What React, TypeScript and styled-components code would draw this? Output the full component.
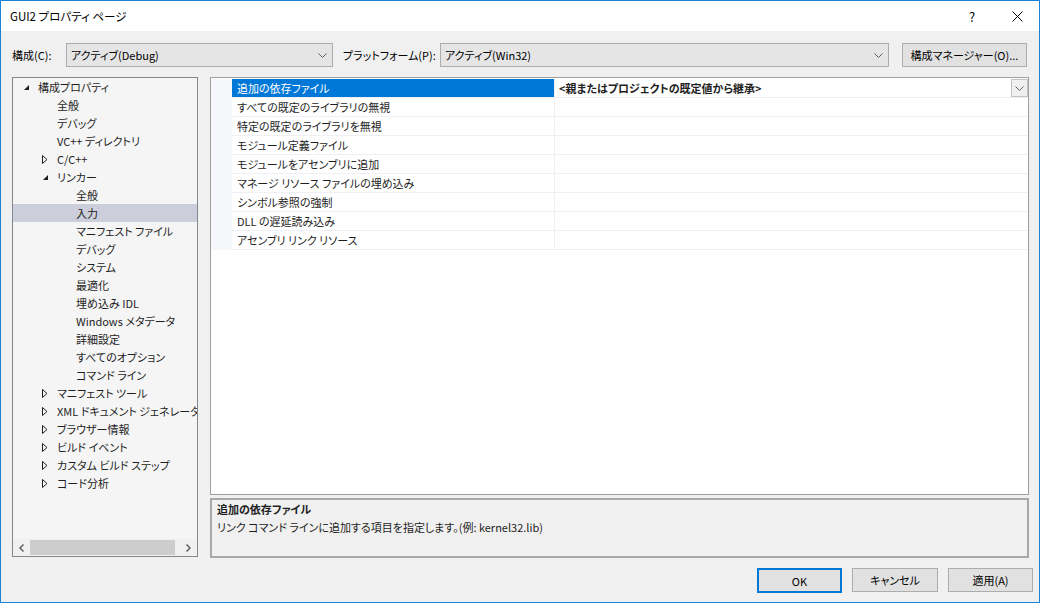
import React from "react";
import styled, { createGlobalStyle } from "styled-components";

const GlobalStyle = createGlobalStyle`
  html, body { margin: 0; padding: 0; background: #ffffff; }
  * { box-sizing: border-box; }
`;

const FONT = `"Noto Sans CJK JP", "Noto Sans", sans-serif`;

const Window = styled.div`
  width: 1040px;
  height: 603px;
  border: 1px solid #1883d7;
  background: #f0f0f0;
  display: flex;
  flex-direction: column;
  font-family: ${FONT};
  font-size: 11px;
  font-feature-settings: "palt";
  color: #000;
  overflow: hidden;
`;

const TitleBar = styled.div`
  height: 30px;
  flex: none;
  background: #ffffff;
  display: flex;
  align-items: center;
  padding-left: 9px;
`;

const Title = styled.div`
  flex: 1;
  line-height: 30px;
  font-size: 11.5px;
`;

const CaptionButton = styled.div<{ $w: number }>`
  width: ${(p) => p.$w}px;
  height: 30px;
  display: flex;
  align-items: center;
  justify-content: center;
  font-size: 13px;
`;

const Body = styled.div`
  flex: 1;
  display: flex;
  flex-direction: column;
  padding: 12px 10px 0 11px;
`;

const Toolbar = styled.div`
  height: 24px;
  display: flex;
  align-items: center;
`;

const FieldLabel = styled.div<{ $w: number }>`
  width: ${(p) => p.$w}px;
  flex: none;
  white-space: nowrap;
`;

const Combo = styled.div<{ $w: number; $ml?: number }>`
  width: ${(p) => p.$w}px;
  height: 24px;
  margin-right: ${(p) => p.$ml ?? 0}px;
  flex: none;
  background: #e5e5e5;
  border: 1px solid #adadad;
  display: flex;
  align-items: center;
  padding: 0 5px 0 4px;
`;

const ComboText = styled.div`
  flex: 1;
  white-space: nowrap;
`;

const PushButton = styled.div<{ $w: number; $default?: boolean }>`
  width: ${(p) => p.$w}px;
  height: ${(p) => (p.$default ? 25 : 24)}px;
  flex: none;
  background: #e1e1e1;
  border: ${(p) => (p.$default ? "2px solid #0078d7" : "1px solid #adadad")};
  display: flex;
  align-items: center;
  justify-content: center;
  white-space: nowrap;
`;

const Main = styled.div`
  margin-top: 10px;
  height: 480px;
  display: flex;
  gap: 12px;
`;

const TreePanel = styled.div`
  width: 186px;
  flex: none;
  border: 1px solid #828790;
  background: #f5f5f5;
  display: flex;
  flex-direction: column;
`;

const TreeList = styled.div`
  flex: 1;
  overflow: hidden;
  color: #1e1e1e;
`;

const TreeRow = styled.div<{ $level: number; $selected?: boolean }>`
  height: 18px;
  display: flex;
  align-items: center;
  padding-left: ${(p) => 6 + p.$level * 19}px;
  background: ${(p) => (p.$selected ? "#cccedb" : "transparent")};
  white-space: nowrap;
  line-height: 18px;
`;

const ArrowSlot = styled.div`
  width: 19px;
  flex: none;
  display: flex;
  align-items: center;
  padding-left: 4px;
`;

const HScroll = styled.div`
  height: 17px;
  flex: none;
  background: #f0f0f0;
  display: flex;
  align-items: center;
`;

const ScrollArrow = styled.div`
  width: 17px;
  height: 17px;
  flex: none;
  display: flex;
  align-items: center;
  justify-content: center;
`;

const ScrollTrack = styled.div`
  flex: 1;
  height: 17px;
  display: flex;
  align-items: center;
  padding-right: 3px;
`;

const ScrollThumb = styled.div`
  height: 15px;
  width: 145px;
  background: #cdcdcd;
`;

const RightColumn = styled.div`
  flex: 1;
  display: flex;
  flex-direction: column;
  gap: 3px;
`;

const Grid = styled.div`
  height: 418px;
  flex: none;
  background: #ffffff;
  border: 1px solid #a0a0a0;
  padding-top: 1px;
`;

const GridBody = styled.div`
  display: flex;
`;

const Gutter = styled.div`
  width: 21px;
  flex: none;
  background: #f5f7fb;
`;

const Rows = styled.div`
  flex: 1;
  display: flex;
  flex-direction: column;
`;

const GridRow = styled.div`
  height: 19px;
  display: flex;
  border-bottom: 1px solid #eef0f4;
`;

const NameCell = styled.div<{ $selected?: boolean }>`
  width: 322px;
  flex: none;
  padding-left: 5px;
  line-height: 18px;
  white-space: nowrap;
  background: ${(p) => (p.$selected ? "#0078d7" : "transparent")};
  color: ${(p) => (p.$selected ? "#ffffff" : "#1e1e1e")};
`;

const ValueCell = styled.div`
  flex: 1;
  display: flex;
  border-left: 1px solid #eef0f4;
  padding-left: 4px;
  line-height: 18px;
  font-weight: 700;
  color: #1e1e1e;
`;

const ValueText = styled.div`
  flex: 1;
  white-space: nowrap;
`;

const DropButton = styled.div`
  width: 17px;
  height: 18px;
  flex: none;
  background: #f0f0f0;
  border: 1px solid #c3c3c3;
  display: flex;
  align-items: center;
  justify-content: center;
`;

const Description = styled.div`
  height: 60px;
  flex: none;
  border: 2px solid #a8a8a8;
  background: #f0f0f0;
  padding-left: 5px;
  line-height: 18px;
  color: #1e1e1e;
`;

const DescTitle = styled.div`
  font-weight: 700;
`;

const Footer = styled.div`
  margin-top: 11px;
  margin-right: -4px;
  display: flex;
  justify-content: flex-end;
  gap: 10px;
`;

const ChevronDown = () => (
  <svg width="9" height="5" viewBox="0 0 9 5">
    <path d="M0.5 0.5 L4.5 4.5 L8.5 0.5" fill="none" stroke="#606060" strokeWidth="1" />
  </svg>
);

const Expanded = () => (
  <svg width="7" height="7" viewBox="0 0 7 7">
    <path d="M6 1 L6 6 L1 6 Z" fill="#1e1e1e" />
  </svg>
);

const Collapsed = () => (
  <svg width="6" height="9" viewBox="0 0 6 9">
    <path d="M0.5 0.5 L5 4.5 L0.5 8.5 Z" fill="none" stroke="#1e1e1e" strokeWidth="1" />
  </svg>
);

const ScrollChevron = ({ dir }: { dir: "left" | "right" }) => (
  <svg width="5" height="8" viewBox="0 0 5 8">
    <path
      d={dir === "left" ? "M4.5 0.5 L1 4 L4.5 7.5" : "M0.5 0.5 L4 4 L0.5 7.5"}
      fill="none"
      stroke="#606060"
      strokeWidth="1.5"
    />
  </svg>
);

const CloseGlyph = () => (
  <svg width="11" height="11" viewBox="0 0 11 11">
    <path d="M0.5 0.5 L10.5 10.5 M10.5 0.5 L0.5 10.5" stroke="#000" strokeWidth="1" />
  </svg>
);

type Node = { level: number; text: string; arrow?: "open" | "closed"; selected?: boolean };

const tree: Node[] = [
  { level: 0, text: "構成プロパティ", arrow: "open" },
  { level: 1, text: "全般" },
  { level: 1, text: "デバッグ" },
  { level: 1, text: "VC++ ディレクトリ" },
  { level: 1, text: "C/C++", arrow: "closed" },
  { level: 1, text: "リンカー", arrow: "open" },
  { level: 2, text: "全般" },
  { level: 2, text: "入力", selected: true },
  { level: 2, text: "マニフェスト ファイル" },
  { level: 2, text: "デバッグ" },
  { level: 2, text: "システム" },
  { level: 2, text: "最適化" },
  { level: 2, text: "埋め込み IDL" },
  { level: 2, text: "Windows メタデータ" },
  { level: 2, text: "詳細設定" },
  { level: 2, text: "すべてのオプション" },
  { level: 2, text: "コマンド ライン" },
  { level: 1, text: "マニフェスト ツール", arrow: "closed" },
  { level: 1, text: "XML ドキュメント ジェネレーター", arrow: "closed" },
  { level: 1, text: "ブラウザー情報", arrow: "closed" },
  { level: 1, text: "ビルド イベント", arrow: "closed" },
  { level: 1, text: "カスタム ビルド ステップ", arrow: "closed" },
  { level: 1, text: "コード分析", arrow: "closed" },
];

const properties = [
  "追加の依存ファイル",
  "すべての既定のライブラリの無視",
  "特定の既定のライブラリを無視",
  "モジュール定義ファイル",
  "モジュールをアセンブリに追加",
  "マネージ リソース ファイルの埋め込み",
  "シンボル参照の強制",
  "DLL の遅延読み込み",
  "アセンブリ リンク リソース",
];

export default function App() {
  return (
    <>
      <GlobalStyle />
      <Window>
        <TitleBar>
          <Title>GUI2 プロパティ ページ</Title>
          <CaptionButton $w={46}>?</CaptionButton>
          <CaptionButton $w={44}>
            <CloseGlyph />
          </CaptionButton>
        </TitleBar>
        <Body>
          <Toolbar>
            <FieldLabel $w={54}>構成(C):</FieldLabel>
            <Combo $w={267} $ml={10}>
              <ComboText>アクティブ(Debug)</ComboText>
              <ChevronDown />
            </Combo>
            <FieldLabel $w={97}>プラットフォーム(P):</FieldLabel>
            <Combo $w={449} $ml={13}>
              <ComboText>アクティブ(Win32)</ComboText>
              <ChevronDown />
            </Combo>
            <PushButton $w={125}>構成マネージャー(O)...</PushButton>
          </Toolbar>
          <Main>
            <TreePanel>
              <TreeList>
                {tree.map((n, i) => (
                  <TreeRow key={i} $level={n.level} $selected={n.selected}>
                    <ArrowSlot>
                      {n.arrow === "open" && <Expanded />}
                      {n.arrow === "closed" && <Collapsed />}
                    </ArrowSlot>
                    {n.text}
                  </TreeRow>
                ))}
              </TreeList>
              <HScroll>
                <ScrollArrow>
                  <ScrollChevron dir="left" />
                </ScrollArrow>
                <ScrollTrack>
                  <ScrollThumb />
                </ScrollTrack>
                <ScrollArrow>
                  <ScrollChevron dir="right" />
                </ScrollArrow>
              </HScroll>
            </TreePanel>
            <RightColumn>
              <Grid>
                <GridBody>
                  <Gutter />
                  <Rows>
                    {properties.map((name, i) => (
                      <GridRow key={name}>
                        <NameCell $selected={i === 0}>{name}</NameCell>
                        <ValueCell>
                          {i === 0 && (
                            <>
                              <ValueText>&lt;親またはプロジェクトの既定値から継承&gt;</ValueText>
                              <DropButton>
                                <ChevronDown />
                              </DropButton>
                            </>
                          )}
                        </ValueCell>
                      </GridRow>
                    ))}
                  </Rows>
                </GridBody>
              </Grid>
              <Description>
                <DescTitle>追加の依存ファイル</DescTitle>
                <div>リンク コマンド ラインに追加する項目を指定します。(例: kernel32.lib)</div>
              </Description>
            </RightColumn>
          </Main>
          <Footer>
            <PushButton $w={85} $default>
              OK
            </PushButton>
            <PushButton $w={86}>キャンセル</PushButton>
            <PushButton $w={85}>適用(A)</PushButton>
          </Footer>
        </Body>
      </Window>
    </>
  );
}
